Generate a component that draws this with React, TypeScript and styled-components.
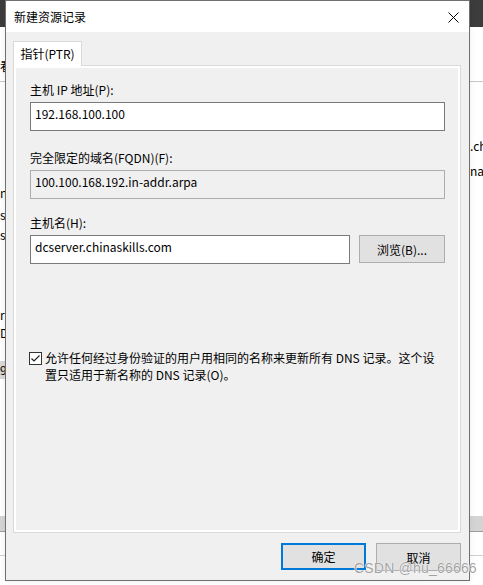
import React from "react";
import styled, { createGlobalStyle } from "styled-components";

const GlobalStyle = createGlobalStyle`
  html, body {
    margin: 0;
    padding: 0;
    background: #ffffff;
    width: 483px;
    height: 585px;
    overflow: hidden;
  }
  body {
    font-family: "Noto Sans CJK SC", "Microsoft YaHei", sans-serif;
    font-size: 12px;
    color: #000;
  }
`;

const Stage = styled.div`
  position: relative;
  width: 483px;
  height: 585px;
  overflow: hidden;
`;

// the window that sits behind the dialog, only its edges show
const Backdrop = styled.div`
  display: flex;
  flex-direction: column;
  width: 483px;
  height: 585px;
  background: #ffffff;
`;

const BackRow = styled.div<{ $h: number; $bg?: string; $line?: string }>`
  display: grid;
  grid-template-columns: 5px 1fr 13px;
  height: ${(p) => p.$h}px;
  flex: none;
  background: ${(p) => p.$bg || "transparent"};
  border-bottom: ${(p) => (p.$line ? `1px solid ${p.$line}` : "none")};
  box-sizing: border-box;
`;

const BackText = styled.div<{ $bg?: string }>`
  overflow: hidden;
  white-space: nowrap;
  font-size: 12px;
  line-height: ${(p) => (p.$bg ? "18px" : "16px")};
  color: #000;
  background: ${(p) => p.$bg || "transparent"};
`;

const Dialog = styled.div`
  position: absolute;
  left: 5px;
  top: 0;
  width: 465px;
  height: 581px;
  box-sizing: border-box;
  border: 1px solid #6f6f6f;
  background: #f0f0f0;
  display: flex;
  flex-direction: column;
  box-shadow: 0 0 6px rgba(0, 0, 0, 0.08);
`;

const TitleBar = styled.div`
  height: 31px;
  flex: none;
  background: #ffffff;
  display: flex;
  align-items: center;
  justify-content: space-between;
  padding: 0 10px 0 8px;
`;

const Title = styled.span`
  font-size: 12px;
  line-height: 16px;
  color: #000;
  margin-top: 1px;
`;

const CloseButton = styled.div`
  width: 12px;
  height: 12px;
  display: flex;
  align-items: center;
  justify-content: center;
  margin-top: 1px;
`;

const Client = styled.div`
  flex: 1;
  display: flex;
  flex-direction: column;
  padding: 9px 8px 10px 7px;
`;

const TabStrip = styled.div`
  display: flex;
  height: 24px;
  flex: none;
  position: relative;
  z-index: 1;
`;

const Tab = styled.div`
  width: 69px;
  height: 25px;
  box-sizing: border-box;
  border: 1px solid #d9d9d9;
  border-bottom: none;
  background: #ffffff;
  display: flex;
  align-items: center;
  justify-content: center;
  padding-bottom: 2px;
  font-size: 12px;
`;

const Panel = styled.div`
  height: 468px;
  flex: none;
  box-sizing: border-box;
  border: 1px solid #d9d9d9;
  box-shadow: inset 0 0 0 2px #ffffff;
  background: #f0f0f0;
  padding: 16px 15px 0 16px;
  display: flex;
  flex-direction: column;
`;

const FieldGroup = styled.div<{ $top: number }>`
  display: flex;
  flex-direction: column;
  margin-top: ${(p) => p.$top}px;
`;

const Label = styled.div`
  font-size: 12px;
  line-height: 16px;
  margin-bottom: 4px;
  white-space: nowrap;
`;

const TextBox = styled.div<{ $readOnly?: boolean; $width?: number }>`
  width: ${(p) => (p.$width ? `${p.$width}px` : "100%")};
  height: 29px;
  box-sizing: border-box;
  border: 1px solid ${(p) => (p.$readOnly ? "#adadad" : "#7a7a7a")};
  background: ${(p) => (p.$readOnly ? "#f0f0f0" : "#ffffff")};
  padding: 3px 4px;
  font-size: 12px;
  line-height: 16px;
  white-space: nowrap;
  overflow: hidden;
`;

const InlineRow = styled.div`
  display: flex;
  align-items: flex-start;
  gap: 9px;
`;

const Button = styled.div<{ $default?: boolean; $width: number }>`
  width: ${(p) => p.$width}px;
  height: ${(p) => (p.$default ? 27 : 28)}px;
  box-sizing: border-box;
  border: ${(p) => (p.$default ? "2px solid #0078d7" : "1px solid #adadad")};
  background: #e1e1e1;
  display: flex;
  align-items: center;
  justify-content: center;
  font-size: 12px;
  flex: none;
`;

const CheckRow = styled.div`
  display: flex;
  align-items: flex-start;
  gap: 3px;
  margin-top: 85px;
  margin-left: -1px;
`;

const CheckBox = styled.div`
  width: 13px;
  height: 13px;
  box-sizing: border-box;
  border: 1px solid #333333;
  background: #ffffff;
  display: flex;
  align-items: center;
  justify-content: center;
  flex: none;
  margin-top: 3px;
`;

const CheckText = styled.div`
  width: 402px;
  font-size: 12px;
  line-height: 17px;
`;

const Footer = styled.div`
  display: flex;
  justify-content: flex-end;
  gap: 10px;
  margin-top: 10px;
`;

const Watermark = styled.div`
  position: absolute;
  left: 354px;
  top: 559px;
  font-family: "Liberation Sans", Arial, sans-serif;
  font-size: 14px;
  line-height: 18px;
  color: rgba(130, 130, 130, 0.75);
  text-shadow: 0 0 1px #ffffff, 0 0 1px #ffffff;
  letter-spacing: 0.2px;
  white-space: nowrap;
`;

const backRows: { h: number; left?: string; right?: string; bg?: string; line?: string; leftBg?: string }[] = [
  { h: 27, bg: "#3c3c3c" },
  { h: 31 },
  { h: 18, left: "看" },
  { h: 6, line: "#c8c8c8" },
  { h: 56 },
  { h: 16, right: ".ch" },
  { h: 9 },
  { h: 16, right: "nas" },
  { h: 6 },
  { h: 16, left: "ni" },
  { h: 6 },
  { h: 16, left: "s." },
  { h: 4 },
  { h: 16, left: "s" },
  { h: 64 },
  { h: 16, left: "r" },
  { h: 2 },
  { h: 16, left: "D" },
  { h: 20 },
  { h: 18, left: "9", leftBg: "#d9d9d9" },
  { h: 137 },
  { h: 16, bg: "#d4d4d4", line: "#9c9c9c" },
  { h: 24, line: "#d0d0d0" },
];

function CloseIcon() {
  return (
    <svg width="11" height="11" viewBox="0 0 11 11">
      <path d="M0.5 0.5 L10.5 10.5 M10.5 0.5 L0.5 10.5" stroke="#000" strokeWidth="1" fill="none" />
    </svg>
  );
}

function CheckMark() {
  return (
    <svg width="11" height="11" viewBox="0 0 11 11">
      <path d="M1.5 5.5 L4 8 L9.5 2.5" stroke="#222" strokeWidth="1.2" fill="none" />
    </svg>
  );
}

export default function App() {
  return (
    <Stage>
      <GlobalStyle />
      <Backdrop>
        {backRows.map((r, i) => (
          <BackRow key={i} $h={r.h} $bg={r.bg} $line={r.line}>
            <BackText $bg={r.leftBg}>{r.left}</BackText>
            <div />
            <BackText>{r.right}</BackText>
          </BackRow>
        ))}
      </Backdrop>

      <Dialog>
        <TitleBar>
          <Title>新建资源记录</Title>
          <CloseButton>
            <CloseIcon />
          </CloseButton>
        </TitleBar>

        <Client>
          <TabStrip>
            <Tab>指针(PTR)</Tab>
          </TabStrip>
          <Panel>
            <FieldGroup $top={0}>
              <Label>主机 IP 地址(P):</Label>
              <TextBox>192.168.100.100</TextBox>
            </FieldGroup>

            <FieldGroup $top={19}>
              <Label>完全限定的域名(FQDN)(F):</Label>
              <TextBox $readOnly>100.100.168.192.in-addr.arpa</TextBox>
            </FieldGroup>

            <FieldGroup $top={16}>
              <Label>主机名(H):</Label>
              <InlineRow>
                <TextBox $width={321}>dcserver.chinaskills.com</TextBox>
                <Button $width={86}>浏览(B)...</Button>
              </InlineRow>
            </FieldGroup>

            <CheckRow>
              <CheckBox>
                <CheckMark />
              </CheckBox>
              <CheckText>
                允许任何经过身份验证的用户用相同的名称来更新所有 DNS 记录。这个设置只适用于新名称的 DNS 记录(O)。
              </CheckText>
            </CheckRow>
          </Panel>

          <Footer>
            <Button $default $width={85}>确定</Button>
            <Button $width={85}>取消</Button>
          </Footer>
        </Client>
      </Dialog>

      <Watermark>CSDN @hu_66666</Watermark>
    </Stage>
  );
}
